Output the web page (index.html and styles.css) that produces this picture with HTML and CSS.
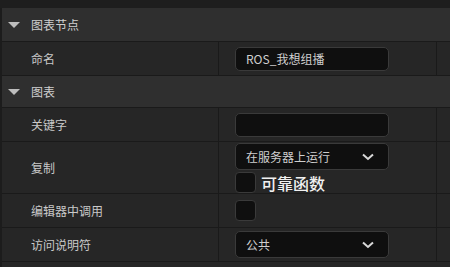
FILE: index.html
```html
<!DOCTYPE html>
<html>
<head>
<meta charset="utf-8">
<link rel="stylesheet" href="styles.css">
</head>
<body>
<div class="panel">
  <div class="topbar"></div>
  <div class="section">
    <div class="header h1"><span class="tri"></span><span class="htext">图表节点</span></div>
    <div class="row r34">
      <div class="name">命名</div>
      <div class="value"><div class="input text">ROS_我想组播</div></div>
      <div class="extra"></div>
    </div>
    <div class="header h2"><span class="tri"></span><span class="htext">图表</span></div>
    <div class="row r34">
      <div class="name">关键字</div>
      <div class="value"><div class="input"></div></div>
      <div class="extra"></div>
    </div>
    <div class="row r52">
      <div class="name">复制</div>
      <div class="value stack">
        <div class="input combo"><span>在服务器上运行</span><svg class="chev" width="12" height="8" viewBox="0 0 12 8"><path d="M1 1.5 L6 6 L11 1.5" fill="none" stroke="#d8d8d8" stroke-width="2"/></svg></div>
        <div class="checkline"><span class="check"></span><span class="checklabel">可靠函数</span></div>
      </div>
      <div class="extra"></div>
    </div>
    <div class="row r34">
      <div class="name">编辑器中调用</div>
      <div class="value"><span class="check"></span></div>
      <div class="extra"></div>
    </div>
    <div class="row r34">
      <div class="name">访问说明符</div>
      <div class="value"><div class="input combo"><span>公共</span><svg class="chev" width="12" height="8" viewBox="0 0 12 8"><path d="M1 1.5 L6 6 L11 1.5" fill="none" stroke="#d8d8d8" stroke-width="2"/></svg></div></div>
      <div class="extra"></div>
    </div>
  </div>
</div>
</body>
</html>
```

FILE: styles.css
```css
html, body {
  margin: 0;
  padding: 0;
  background: #1c1c1c;
  width: 450px;
  height: 267px;
  overflow: hidden;
  font-family: "Noto Sans CJK SC", "Noto Sans", sans-serif;
}
.panel {
  display: flex;
  flex-direction: column;
  height: 267px;
}
.topbar {
  height: 8px;
  background: #1e1e1e;
  flex: none;
}
.section {
  margin-left: 2px;
  background: #262626;
  flex: 1;
}
.header {
  display: flex;
  align-items: center;
  background: #2f2f2f;
  border-bottom: 1px solid #1a1a1a;
  box-sizing: border-box;
}
.h1 { height: 34px; }
.h2 { height: 32px; }
.tri {
  width: 0;
  height: 0;
  margin-left: 6px;
  border-left: 6px solid transparent;
  border-right: 6px solid transparent;
  border-top: 6px solid #bdbdbd;
}
.htext {
  margin-left: 11px;
  font-size: 12px;
  color: #cfcfcf;
}
.row {
  display: grid;
  grid-template-columns: 217px 218px 1fr;
  border-bottom: 1px solid #1a1a1a;
  box-sizing: border-box;
}
.r34 { height: 34px; }
.r52 { height: 52px; }
.name {
  display: flex;
  align-items: center;
  padding-left: 29px;
  font-size: 12px;
  color: #c9c9c9;
  border-right: 1px solid #1a1a1a;
}
.value {
  display: flex;
  align-items: center;
  padding-left: 16px;
  border-right: 1px solid #1a1a1a;
}
.value.stack {
  flex-direction: column;
  align-items: flex-start;
  justify-content: flex-start;
  padding-top: 1px;
  gap: 2px;
}
.input {
  box-sizing: border-box;
  width: 154px;
  height: 24px;
  background: #0f0f0f;
  border: 1px solid #3a3a3a;
  border-radius: 5px;
  display: flex;
  align-items: center;
  padding-left: 10px;
  font-size: 12px;
  color: #cfcfcf;
}
.input.combo {
  height: 27px;
  justify-content: space-between;
  padding-right: 14px;
}
.chev { display: block; }
.checkline {
  display: flex;
  align-items: center;
  gap: 5px;
}
.check {
  box-sizing: border-box;
  width: 21px;
  height: 21px;
  background: #0f0f0f;
  border: 1px solid #3a3a3a;
  border-radius: 4px;
  display: block;
}
.checklabel {
  font-size: 16px;
  font-weight: 500;
  color: #f0f0f0;
  line-height: 18px;
}
```
